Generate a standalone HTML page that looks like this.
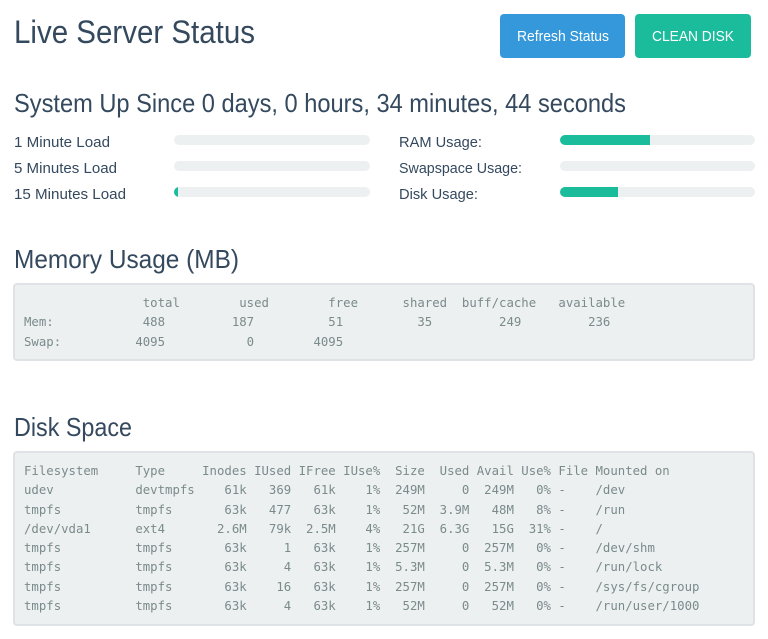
<!DOCTYPE html>
<html>
<head>
<meta charset="utf-8">
<style>
html,body{margin:0;padding:0;width:768px;height:639px;overflow:hidden;background:#fff}
svg.t{position:absolute;left:0;top:0;width:768px;height:639px;filter:blur(.25px)}
svg.t text{font-family:"Liberation Sans",sans-serif;fill:#34495e}
.bar{position:absolute;height:10px;background:#ecf0f1;border-radius:5px;overflow:hidden}
.bar i{position:absolute;left:0;top:0;height:10px;background:#1abc9c;display:block}
.btn{position:absolute;top:14px;height:44px;border-radius:4px}
pre{position:absolute;left:13px;width:738px;margin:0;background:#ecf0f1;border:2px solid #dfe3e5;border-radius:4px;box-sizing:content-box;
font-family:"DejaVu Sans Mono",monospace;font-size:12.34px;line-height:19.3px;color:#7b8a8b;padding:0}
pre span{position:absolute;left:9px;white-space:pre;filter:blur(.2px)}
</style>
</head>
<body>
<div class="btn" style="left:500px;width:125px;background:#3498db"></div>
<div class="btn" style="left:635px;width:116px;background:#1abc9c"></div>

<div class="bar" style="left:174px;top:135px;width:196px"></div>
<div class="bar" style="left:174px;top:161px;width:196px"></div>
<div class="bar" style="left:174px;top:187px;width:196px"><i style="width:4px"></i></div>
<div class="bar" style="left:560px;top:135px;width:195px"><i style="width:90px"></i></div>
<div class="bar" style="left:560px;top:161px;width:195px"></div>
<div class="bar" style="left:560px;top:187px;width:195px"><i style="width:58px"></i></div>

<pre style="top:283px;height:74px"><span style="top:9px">                total        used        free      shared  buff/cache   available
Mem:            488         187          51          35         249         236
Swap:          4095           0        4095</span></pre>

<pre style="top:451px;height:171px"><span style="top:9px">Filesystem     Type     Inodes IUsed IFree IUse%  Size  Used Avail Use% File Mounted on
udev           devtmpfs    61k   369   61k    1%  249M     0  249M   0% -    /dev
tmpfs          tmpfs       63k   477   63k    1%   52M  3.9M   48M   8% -    /run
/dev/vda1      ext4       2.6M   79k  2.5M    4%   21G  6.3G   15G  31% -    /
tmpfs          tmpfs       63k     1   63k    1%  257M     0  257M   0% -    /dev/shm
tmpfs          tmpfs       63k     4   63k    1%  5.3M     0  5.3M   0% -    /run/lock
tmpfs          tmpfs       63k    16   63k    1%  257M     0  257M   0% -    /sys/fs/cgroup
tmpfs          tmpfs       63k     4   63k    1%   52M     0   52M   0% -    /run/user/1000</span></pre>

<svg class="t" viewBox="0 0 768 639">
<text x="14" y="43" font-size="32" textLength="241" lengthAdjust="spacingAndGlyphs">Live Server Status</text>
<text x="14" y="112" font-size="26" textLength="612" lengthAdjust="spacingAndGlyphs">System Up Since 0 days, 0 hours, 34 minutes, 44 seconds</text>
<text x="14" y="268" font-size="26" textLength="225" lengthAdjust="spacingAndGlyphs">Memory Usage (MB)</text>
<text x="14" y="436" font-size="26" textLength="118" lengthAdjust="spacingAndGlyphs">Disk Space</text>
<text x="14" y="147" font-size="15" textLength="96" lengthAdjust="spacingAndGlyphs">1 Minute Load</text>
<text x="14" y="173" font-size="15" textLength="103" lengthAdjust="spacingAndGlyphs">5 Minutes Load</text>
<text x="14" y="199" font-size="15" textLength="112" lengthAdjust="spacingAndGlyphs">15 Minutes Load</text>
<text x="399" y="147" font-size="15" textLength="83" lengthAdjust="spacingAndGlyphs">RAM Usage:</text>
<text x="399" y="173" font-size="15" textLength="123" lengthAdjust="spacingAndGlyphs">Swapspace Usage:</text>
<text x="399" y="199" font-size="15" textLength="79" lengthAdjust="spacingAndGlyphs">Disk Usage:</text>
<text x="517" y="41" font-size="15" textLength="92" lengthAdjust="spacingAndGlyphs" style="fill:#fff">Refresh Status</text>
<text x="652" y="41" font-size="15" textLength="82" lengthAdjust="spacingAndGlyphs" style="fill:#fff">CLEAN DISK</text>
</svg>
</body>
</html>
